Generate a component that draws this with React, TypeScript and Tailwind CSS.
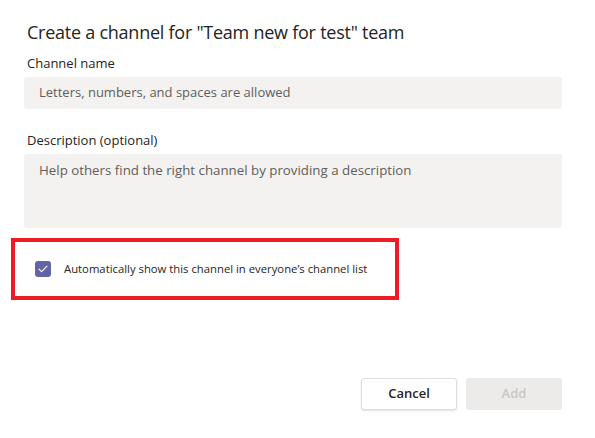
export default function App() {
  return (
    <div
      className="w-[595px] h-[438px] bg-white text-[#252423] relative overflow-hidden"
      style={{ fontFamily: '"Open Sans", "Noto Sans", sans-serif' }}
    >
      <div className="pl-[24px] pr-[33px] pt-[20px]">
        <h1 className="text-[18px] leading-[24px] pl-[3px] font-normal tracking-[-0.25px]">
          Create a channel for "Team new for test" team
        </h1>

        <div className="mt-[9px] pl-[3px] text-[13px] leading-[20px]">Channel name</div>
        <div className="mt-[4px] h-[32px] rounded-[3px] bg-[#f3f2f1] flex items-center pl-[15px] text-[13px] text-[#605e5c]">
          Letters, numbers, and spaces are allowed
        </div>

        <div className="mt-[21px] pl-[3px] text-[13px] leading-[20px]">Description (optional)</div>
        <div className="mt-[4px] h-[74px] rounded-[3px] bg-[#f3f2f1] pl-[15px] pt-[6px] text-[13.3px] leading-[20px] text-[#605e5c]">
          Help others find the right channel by providing a description
        </div>
      </div>

      <div className="ml-[11px] mt-[10px] w-[388px] h-[62px] border-[4px] border-[#ed1c24] flex items-center pl-[20px] gap-[13px]">
        <div className="w-[16px] h-[16px] rounded-[3px] bg-[#6264a7] flex items-center justify-center">
          <svg width="10" height="8" viewBox="0 0 10 8" fill="none">
            <path d="M1 4.2 L3.6 6.6 L9 1.2" stroke="white" strokeWidth="1.1" strokeLinecap="round" strokeLinejoin="round" />
          </svg>
        </div>
        <span className="text-[11.3px] text-[#252423]">Automatically show this channel in everyone’s channel list</span>
      </div>

      <div className="absolute right-[33px] bottom-[28px] flex gap-[9px]">
        <button className="w-[96px] h-[32px] rounded-[3px] bg-white border border-[#e1dfdd] shadow-[0_1px_2px_rgba(0,0,0,0.12)] text-[13px] font-semibold text-[#252423]">
          Cancel
        </button>
        <button className="w-[96px] h-[32px] rounded-[3px] bg-[#edebe9] text-[13px] font-semibold text-[#c8c6c4]">
          Add
        </button>
      </div>
    </div>
  );
}
